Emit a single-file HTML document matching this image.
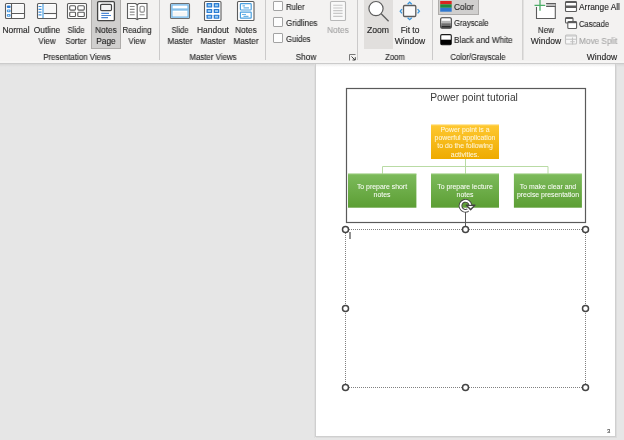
<!DOCTYPE html>
<html><head><meta charset="utf-8">
<style>
html,body{margin:0;padding:0;}
body{width:624px;height:440px;overflow:hidden;position:relative;background:#e6e6e6;font-family:"Liberation Sans",sans-serif;}
.t{position:absolute;white-space:nowrap;will-change:transform;-webkit-text-stroke:0.12px currentColor;}
.abs{position:absolute;}
#ribbon{position:absolute;left:0;top:0;width:624px;height:63px;background:#f3f2f1;}
.sep{position:absolute;top:0;width:1px;height:60px;background:#cbcaca;}
.sel{position:absolute;background:#d0cfce;border:1px solid #aeacaa;box-sizing:border-box;}
.hov{position:absolute;background:#e1dfdd;}
.cb{position:absolute;width:10px;height:10px;box-sizing:border-box;border:1px solid #a3a3a3;background:#fdfdfd;border-radius:1px;}
</style></head><body>
<div id="ribbon">
  <div class="sel" style="left:91px;top:-1px;width:30px;height:50px;"></div>
  <div class="hov" style="left:364px;top:0;width:29px;height:49px;"></div>
  <div class="sel" style="left:438px;top:-1px;width:41px;height:16px;"></div>
  <div class="sep" style="left:159px"></div>
  <div class="sep" style="left:265px"></div>
  <div class="sep" style="left:357px"></div>
  <div class="sep" style="left:432px"></div>
  <div class="sep" style="left:522px;background:#d2d1d0"></div><div class="sep" style="left:523px;background:#e2e1e0"></div>
  <div class="cb" style="left:273px;top:1px"></div>
  <div class="cb" style="left:273px;top:17px"></div>
  <div class="cb" style="left:273px;top:33px"></div>
<svg class="abs" style="left:0;top:0" width="624" height="63" viewBox="0 0 624 63">
 <g fill="none" stroke="#5c5c5c" stroke-width="1.1">
  <!-- Normal -->
  <rect x="5.5" y="3.5" width="19" height="15" rx="1" fill="#fff"/>
  <rect x="12" y="5" width="11.5" height="7.5" fill="#f7f7f7" stroke="none"/>
  <path d="M11.5 3.5V18.5M11.5 13.5H24.5"/>
  <!-- Outline -->
  <rect x="37.5" y="3.5" width="19" height="15" rx="1" fill="#fff"/>
  <rect x="44" y="5" width="11.5" height="7.5" fill="#f7f7f7" stroke="none"/>
  <path d="M43.5 13.5H56.5"/>
  <!-- Slide sorter -->
  <rect x="67.5" y="3.5" width="19" height="15" rx="1" fill="#fff"/>
  <rect x="69.7" y="5.8" width="5.8" height="4.3" rx="1"/>
  <rect x="77.8" y="5.8" width="6.5" height="4.3" rx="1"/>
  <rect x="69.7" y="12.3" width="5.8" height="4.2" rx="0.8"/>
  <rect x="77.8" y="12.3" width="6.5" height="4.2" rx="0.8"/>
  <!-- Reading view -->
  <path d="M127.5 3.5H135.5L137.2 4.8L139 3.5H147V18.5H139L137.2 19.5L135.5 18.5H127.5Z" fill="#fff"/>
  <path d="M137.2 4.8V19.3"/>
  <path d="M129.8 6.5H134.6M129.8 9.4H134.6M129.8 12.1H134.6M129.8 14.8H134.6M139.6 14.8H144.6" stroke="#8a8a8a"/>
  <rect x="140" y="6.3" width="4.3" height="5.8" rx="1.2" stroke="#8a8a8a"/>
  <!-- Slide Master -->
  <rect x="170.5" y="3.5" width="19" height="15" rx="1" fill="#fff" stroke="#6e6e6e"/>
  <!-- Handout master -->
  <rect x="204.5" y="1.5" width="16.5" height="19" rx="1" fill="#fff"/>
  <!-- Notes master -->
  <rect x="237.5" y="1.5" width="16.5" height="19" rx="1" fill="#fff"/>
  <!-- Zoom -->
  <circle cx="376" cy="8.6" r="7.1" fill="#fff" stroke-width="1.2"/>
  <path d="M381.2 13.8L388.6 21.3" stroke-width="1.3"/>
  <!-- Fit to window -->
  <rect x="403.5" y="5.5" width="12.3" height="11" rx="1.2" fill="#fafafa" stroke-width="1.3"/>
  <path d="M407.6 4.2L409.7 2.2L411.8 4.2M407.6 17.7L409.7 19.7L411.8 17.7M402 9.1L400.2 11.2L402 13.3M417.6 9.1L419.4 11.2L417.6 13.3" stroke="#3a96dd" stroke-width="1.3"/>
  <!-- New window -->
  <path d="M536.5 7V18.5H555.3V3.5H546.3M546.3 6.3H555.3" fill="#fff"/>
  <rect x="546.3" y="4" width="9" height="2" fill="#bdbdbd" stroke="none"/><path d="M546.3 3.5H555.5M546.3 6.5H555.5" stroke="#5c5c5c" stroke-width="1"/>
  <path d="M534.5 5.3H545.3M540 0V10.8" stroke="#4aad66" stroke-width="1.3"/>
  <!-- Arrange all -->
  <rect x="565.5" y="1.5" width="11" height="10" rx="1" fill="#fff"/>
  <path d="M565.5 2.3H576.5M565.5 6.2H576.5M565.5 7.2H576.5" stroke-width="1.4"/>
  <!-- Cascade -->
  <rect x="565.5" y="17.5" width="7.5" height="5.5" rx="1" fill="#fff"/>
  <path d="M565.5 18.3H573" stroke-width="1.4"/>
  <rect x="567.8" y="21.5" width="8.8" height="7" rx="1" fill="#fff"/>
  <path d="M567.8 22.4H576.6" stroke-width="1.6"/>
  <!-- Move split disabled -->
  <g stroke="#c2c2c2">
   <rect x="565.5" y="35" width="11" height="9" rx="1" fill="#f7f7f7"/>
   <path d="M565.5 36H576.5M565.5 39.3H576.5M572.5 37.5V44.5M570.2 41.8H574.8"/>
  </g>
  <!-- Notes disabled -->
  <g stroke="#b8b8b8">
   <rect x="330.5" y="1.5" width="15" height="19" rx="1" fill="#f9f9f9"/>
   <path d="M333.2 5.3H342.6M333.2 8H342.6M333.2 10.6H342.6M333.2 13.4H342.6M333.2 16.4H342.6" stroke="#c8c8c8"/>
  </g>
  <!-- Notes page -->
  <rect x="97.6" y="1.6" width="16.8" height="19" rx="1.2" fill="#fff" stroke="#444" stroke-width="1.3"/>
  <rect x="100.6" y="4.3" width="10.9" height="6.3" rx="1.2" fill="#f3f3f3" stroke="#444" stroke-width="1.2"/>
  <path d="M101.3 13.4H109M101.3 15.5H111M101.3 17.6H108" stroke="#4a86d4" stroke-width="1.1"/>
  <!-- launcher -->
  <path d="M349.5 60.5V54.5H355.5" stroke="#777" stroke-width="1"/>
  <path d="M351.5 56.5L355 60M352.5 60H355.3V57.2" stroke="#444" stroke-width="1"/>
 </g>
 <!-- blue fills -->
 <g fill="#2b7cd3">
  <rect x="6.8" y="5.5" width="3.8" height="2.6" rx="1"/>
  <rect x="6.8" y="9.5" width="3.8" height="2.7" rx="1" fill="#4b9ae0"/>
  <rect x="6.8" y="14" width="3.8" height="2.7" rx="1" fill="#4b9ae0"/>
 </g>
 <path d="M8.1 10.2L9.6 10.85L8.1 11.5ZM8.1 14.7L9.6 15.35L8.1 16Z" fill="#fff"/>
 <path d="M38.5 6.5H41.5M38.5 9.4H41.5M38.5 12.1H41.5M38.5 14.9H41.5" stroke="#3d8fdc" stroke-width="1.1"/>
 <rect x="42.2" y="4" width="1.6" height="14" fill="#7ab8e8"/>
 <!-- slide master inner -->
 <rect x="171.9" y="4.9" width="16.2" height="12.2" fill="#fff" stroke="#6db5ea" stroke-width="1.3"/>
 <rect x="171.5" y="8.4" width="17" height="2.3" fill="#86c0ea"/>
 <rect x="173.2" y="12" width="13.6" height="4" fill="#f6f6f6"/>
 <!-- handout inner -->
 <g fill="#2b7cd3">
  <rect x="206.5" y="3" width="5.7" height="4.6" rx="0.6"/>
  <rect x="213.7" y="3" width="5.6" height="4.6" rx="0.6"/>
  <rect x="206.5" y="9" width="5.7" height="4.1" rx="0.6"/>
  <rect x="213.7" y="9" width="5.6" height="4.1" rx="0.6"/>
  <rect x="206.5" y="14.7" width="5.7" height="4.1" rx="0.6"/>
  <rect x="213.7" y="14.7" width="5.6" height="4.1" rx="0.6"/>
 </g>
 <g fill="#9bcdf2">
  <rect x="207.8" y="4.3" width="3.1" height="2"/>
  <rect x="215" y="4.3" width="3" height="2"/>
  <rect x="207.8" y="10.1" width="3.1" height="1.9"/>
  <rect x="215" y="10.1" width="3" height="1.9"/>
  <rect x="207.8" y="15.8" width="3.1" height="1.9"/>
  <rect x="215" y="15.8" width="3" height="1.9"/>
 </g>
 <!-- notes master inner -->
 <g fill="none" stroke="#4aa0e0" stroke-width="1.2">
  <rect x="240.4" y="3.7" width="10.8" height="6.3" rx="0.8"/>
  <rect x="240.4" y="12.1" width="10.8" height="6.1" rx="0.5"/>
  <path d="M242.5 5.8H245M243.5 7.8H249M242 14.5H246M243.5 16.4H248.5" stroke="#6bb4e8"/>
 </g>
 <!-- color -->
 <rect x="440.2" y="1" width="11.5" height="3.3" fill="#d9241f"/>
 <rect x="440.2" y="4.3" width="11.5" height="3.5" fill="#1f8a3c"/>
 <rect x="440.2" y="7.8" width="11.5" height="3.9" fill="#2f78d0"/>
 <!-- grayscale -->
 <rect x="440.7" y="17.7" width="10.6" height="10.4" rx="1.2" fill="#fff" stroke="#3a3a3a" stroke-width="1.1"/>
 <rect x="441.3" y="20.8" width="9.5" height="2.4" fill="#b5b5b5"/>
 <rect x="441.3" y="23.2" width="9.5" height="2.3" fill="#6e6e6e"/>
 <rect x="441.3" y="25.5" width="9.5" height="2.2" fill="#2a2a2a"/>
 <!-- bw -->
 <rect x="440.7" y="34.6" width="10.6" height="10.2" rx="1.2" fill="#fff" stroke="#1a1a1a" stroke-width="1.1"/>
 <rect x="441" y="39.7" width="10" height="5" fill="#000"/>
</svg>

<div class="t" style="left:-84.5px;width:200px;text-align:center;top:24.54px;font-size:8.4px;line-height:10.5px;color:#262626;">Normal</div>
<div class="t" style="left:-53.5px;width:200px;text-align:center;top:24.54px;font-size:8.4px;line-height:10.5px;color:#262626;">Outline</div>
<div class="t" style="left:-53.5px;width:200px;text-align:center;top:35.54px;font-size:8.4px;line-height:10.5px;color:#262626;transform:scaleX(0.956);">View</div>
<div class="t" style="left:-23.700000000000003px;width:200px;text-align:center;top:24.54px;font-size:8.4px;line-height:10.5px;color:#262626;transform:scaleX(0.914);">Slide</div>
<div class="t" style="left:-23.700000000000003px;width:200px;text-align:center;top:35.54px;font-size:8.4px;line-height:10.5px;color:#262626;transform:scaleX(0.926);">Sorter</div>
<div class="t" style="left:6px;width:200px;text-align:center;top:24.54px;font-size:8.4px;line-height:10.5px;color:#262626;transform:scaleX(0.986);">Notes</div>
<div class="t" style="left:6px;width:200px;text-align:center;top:35.54px;font-size:8.4px;line-height:10.5px;color:#262626;">Page</div>
<div class="t" style="left:37.30000000000001px;width:200px;text-align:center;top:24.54px;font-size:8.4px;line-height:10.5px;color:#262626;transform:scaleX(0.933);">Reading</div>
<div class="t" style="left:37.30000000000001px;width:200px;text-align:center;top:35.54px;font-size:8.4px;line-height:10.5px;color:#262626;transform:scaleX(0.956);">View</div>
<div class="t" style="left:80px;width:200px;text-align:center;top:24.54px;font-size:8.4px;line-height:10.5px;color:#262626;transform:scaleX(0.914);">Slide</div>
<div class="t" style="left:80px;width:200px;text-align:center;top:35.54px;font-size:8.4px;line-height:10.5px;color:#262626;transform:scaleX(0.981);">Master</div>
<div class="t" style="left:112.80000000000001px;width:200px;text-align:center;top:24.54px;font-size:8.4px;line-height:10.5px;color:#262626;transform:scaleX(1.009);">Handout</div>
<div class="t" style="left:112.80000000000001px;width:200px;text-align:center;top:35.54px;font-size:8.4px;line-height:10.5px;color:#262626;transform:scaleX(0.981);">Master</div>
<div class="t" style="left:145.6px;width:200px;text-align:center;top:24.54px;font-size:8.4px;line-height:10.5px;color:#262626;transform:scaleX(0.986);">Notes</div>
<div class="t" style="left:145.6px;width:200px;text-align:center;top:35.54px;font-size:8.4px;line-height:10.5px;color:#262626;transform:scaleX(0.981);">Master</div>
<div class="t" style="left:278.1px;width:200px;text-align:center;top:24.54px;font-size:8.4px;line-height:10.5px;color:#262626;transform:scaleX(1.033);">Zoom</div>
<div class="t" style="left:310px;width:200px;text-align:center;top:24.54px;font-size:8.4px;line-height:10.5px;color:#262626;transform:scaleX(1.005);">Fit to</div>
<div class="t" style="left:310px;width:200px;text-align:center;top:35.54px;font-size:8.4px;line-height:10.5px;color:#262626;transform:scaleX(1.020);">Window</div>
<div class="t" style="left:446px;width:200px;text-align:center;top:24.54px;font-size:8.4px;line-height:10.5px;color:#262626;transform:scaleX(0.952);">New</div>
<div class="t" style="left:446px;width:200px;text-align:center;top:35.54px;font-size:8.4px;line-height:10.5px;color:#262626;transform:scaleX(1.020);">Window</div>
<div class="t" style="left:237.5px;width:200px;text-align:center;top:24.54px;font-size:8.4px;line-height:10.5px;color:#a6a6a6;transform:scaleX(0.986);">Notes</div>
<div class="t" style="left:-23.299999999999997px;width:200px;text-align:center;top:52.24px;font-size:8.4px;line-height:10.5px;color:#262626;transform:scaleX(0.944);">Presentation Views</div>
<div class="t" style="left:112.80000000000001px;width:200px;text-align:center;top:52.24px;font-size:8.4px;line-height:10.5px;color:#262626;transform:scaleX(0.942);">Master Views</div>
<div class="t" style="left:206.3px;width:200px;text-align:center;top:52.24px;font-size:8.4px;line-height:10.5px;color:#262626;transform:scaleX(0.971);">Show</div>
<div class="t" style="left:295.3px;width:200px;text-align:center;top:52.24px;font-size:8.4px;line-height:10.5px;color:#262626;transform:scaleX(0.921);">Zoom</div>
<div class="t" style="left:378.2px;width:200px;text-align:center;top:52.24px;font-size:8.4px;line-height:10.5px;color:#262626;transform:scaleX(0.919);">Color/Grayscale</div>
<div class="t" style="left:502.29999999999995px;width:200px;text-align:center;top:52.24px;font-size:8.4px;line-height:10.5px;color:#262626;transform:scaleX(1.020);">Window</div>
<div class="t" style="left:286.40px;top:1.94px;font-size:8.4px;line-height:10.5px;color:#262626;transform-origin:0 0;transform:scaleX(0.925);">Ruler</div>
<div class="t" style="left:286.40px;top:17.94px;font-size:8.4px;line-height:10.5px;color:#262626;transform-origin:0 0;transform:scaleX(0.952);">Gridlines</div>
<div class="t" style="left:286.40px;top:33.84px;font-size:8.4px;line-height:10.5px;color:#262626;transform-origin:0 0;transform:scaleX(0.925);">Guides</div>
<div class="t" style="left:454.00px;top:2.04px;font-size:8.4px;line-height:10.5px;color:#262626;transform-origin:0 0;transform:scaleX(0.983);">Color</div>
<div class="t" style="left:454.00px;top:18.44px;font-size:8.4px;line-height:10.5px;color:#262626;transform-origin:0 0;transform:scaleX(0.918);">Grayscale</div>
<div class="t" style="left:454.00px;top:35.44px;font-size:8.4px;line-height:10.5px;color:#262626;transform-origin:0 0;transform:scaleX(0.970);">Black and White</div>
<div class="t" style="left:578.80px;top:2.04px;font-size:8.4px;line-height:10.5px;color:#262626;transform-origin:0 0;">Arrange All</div>
<div class="t" style="left:578.80px;top:18.74px;font-size:8.4px;line-height:10.5px;color:#262626;transform-origin:0 0;transform:scaleX(0.910);">Cascade</div>
<div class="t" style="left:578.80px;top:35.74px;font-size:8.4px;line-height:10.5px;color:#a6a6a6;transform-origin:0 0;transform:scaleX(0.982);">Move Split</div>
</div>
<div class="abs" style="left:0;top:61px;width:624px;height:2px;background:#f6f5f4"></div>
<div class="abs" style="left:0;top:63px;width:624px;height:1px;background:#cbcbcb"></div>
<div class="abs" style="left:0;top:64px;width:624px;height:3px;background:linear-gradient(#d8d8d8,#e6e6e6)"></div>
<div class="abs" style="left:315px;top:64px;width:1px;height:373px;background:#cfcfcf"></div><div class="abs" style="left:314px;top:64px;width:1px;height:374px;background:#dedede"></div>
<div class="abs" style="left:316px;top:64px;width:299px;height:372px;background:#fff"></div><div class="abs" style="left:316px;top:64px;width:299px;height:3px;background:linear-gradient(#ececec,#fff)"></div>
<div class="abs" style="left:615px;top:64px;width:1px;height:373px;background:#cfcfcf"></div>
<div class="abs" style="left:315px;top:436px;width:301px;height:1px;background:#cfcfcf"></div><div class="abs" style="left:316px;top:437px;width:301px;height:1px;background:#dcdcdc"></div><div class="abs" style="left:616px;top:64px;width:1px;height:373px;background:#dcdcdc"></div>
<div class="abs" style="left:345px;top:229px;width:241px;height:159px;box-sizing:border-box;border:1px dotted #808080"></div>
<svg class="abs" style="left:0;top:0" width="624" height="440" viewBox="0 0 624 440">
 <defs>
  <linearGradient id="gy" x1="0" y1="0" x2="0" y2="1">
   <stop offset="0" stop-color="#fec832"/>
   <stop offset="1" stop-color="#eeab00"/>
  </linearGradient>
  <linearGradient id="gg" x1="0" y1="0" x2="0" y2="1">
   <stop offset="0" stop-color="#7dbb5c"/>
   <stop offset="1" stop-color="#5c9e34"/>
  </linearGradient>
 </defs>
 <!-- slide frame -->
 <rect x="346.5" y="88.5" width="239" height="134" fill="#fff" stroke="#5a5a5a" stroke-width="1.2"/>
 <!-- connectors -->
 <path d="M465.5 159V173.7M382.5 166.5H548M382.5 166.5V173.7M548 166.5V173.7" stroke="#b9dba4" stroke-width="1" fill="none"/>
 <rect x="431" y="124.7" width="68" height="34.3" fill="url(#gy)"/>
 <rect x="431" y="124.7" width="68" height="0.8" fill="#ffd863"/>
 <rect x="348" y="173.7" width="68.4" height="34" fill="url(#gg)"/>
 <rect x="431" y="173.7" width="68" height="34" fill="url(#gg)"/>
 <rect x="513.9" y="173.7" width="68" height="34" fill="url(#gg)"/>
 <rect x="348" y="173.7" width="68.4" height="0.8" fill="#97cc7b"/>
 <rect x="431" y="173.7" width="68" height="0.8" fill="#97cc7b"/>
 <rect x="513.9" y="173.7" width="68" height="0.8" fill="#97cc7b"/>
 <!-- rotation stem -->
 <path d="M465.5 212V226" stroke="#5a5a5a" stroke-width="1" fill="none"/>
 <!-- notes placeholder dotted -->
 
 <g fill="#fff" stroke="#444" stroke-width="1.5">
  <circle cx="345.5" cy="229.5" r="3"/>
  <circle cx="465.5" cy="229.5" r="3"/>
  <circle cx="585.5" cy="229.5" r="3"/>
  <circle cx="345.5" cy="308.5" r="3"/>
  <circle cx="585.5" cy="308.5" r="3"/>
  <circle cx="345.5" cy="387.5" r="3"/>
  <circle cx="465.5" cy="387.5" r="3"/>
  <circle cx="585.5" cy="387.5" r="3"/>
 </g>
 <!-- rotation handle -->
 <g fill="none">
  <path d="M468 210.1A5 5 0 1 1 470.4 204.9" stroke="#444" stroke-width="3.6"/>
  <path d="M466.2 205.1L475 205.1L470.6 209.8Z" fill="#444" stroke="#444" stroke-width="1.2" stroke-linejoin="round"/>
  <path d="M468 210.1A5 5 0 1 1 470.4 204.9" stroke="#fff" stroke-width="1.8"/>
  <path d="M468 206L473.3 206L470.6 208.6Z" fill="#fff"/>
 </g>
 <!-- text cursor -->
 <path d="M350 232V239" stroke="#555" stroke-width="1.3"/>
</svg>
<div class="t" style="left:374.3px;width:200px;text-align:center;top:92.3px;font-size:10.25px;line-height:12px;color:#3a3a3a;-webkit-text-stroke:0">Power point tutorial</div>
<div class="t" style="left:365px;width:200px;text-align:center;top:125.6px;font-size:6.9px;line-height:8.2px;color:#fff6dc;-webkit-text-stroke:0.05px currentColor">Power point is a<br>powerful application<br>to do the following<br>activities.</div>
<div class="t" style="left:282.2px;width:200px;text-align:center;top:183.1px;font-size:6.9px;line-height:8.1px;color:#fbfdf9;-webkit-text-stroke:0.05px currentColor">To prepare short<br>notes</div>
<div class="t" style="left:365px;width:200px;text-align:center;top:183.1px;font-size:6.9px;line-height:8.1px;color:#fbfdf9;-webkit-text-stroke:0.05px currentColor">To prepare lecture<br>notes</div>
<div class="t" style="left:447.9px;width:200px;text-align:center;top:183.1px;font-size:6.9px;line-height:8.1px;color:#fbfdf9;-webkit-text-stroke:0.05px currentColor">To make clear and<br>precise presentation</div>
<div class="t" style="left:607px;top:427.5px;font-size:6px;line-height:7px;color:#444">3</div>

</body></html>
